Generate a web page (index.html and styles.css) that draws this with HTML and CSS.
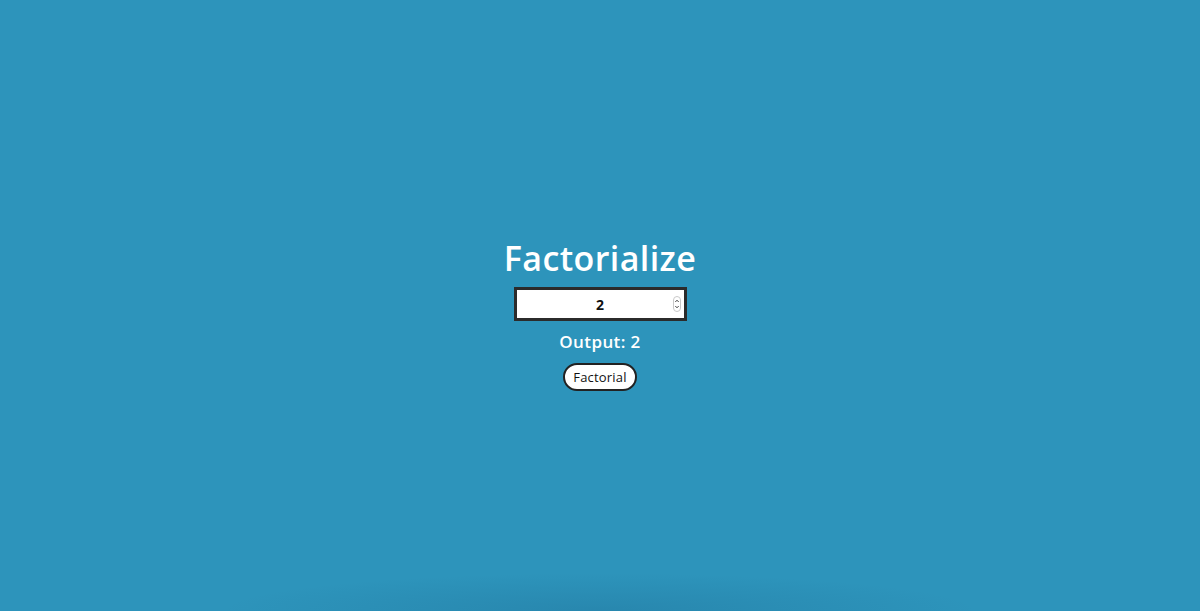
FILE: index.html
```html
<!DOCTYPE html>
<html lang="en">
<head>
<meta charset="utf-8">
<title>Factorialize</title>
<link rel="stylesheet" href="styles.css">
</head>
<body>
<main class="hero">
  <h1 class="title">Factorialize</h1>
  <div class="field">
    <input class="num" type="text" value="2">
    <svg class="spin" width="8" height="16" viewBox="0 0 8 16">
      <rect x="0.5" y="0.5" width="7" height="15" rx="3.5" fill="#fff" stroke="#c8c8c8"/>
      <path d="M2.3 6 L4 4.2 L5.7 6" fill="none" stroke="#333" stroke-width="0.9"/>
      <path d="M2.3 10 L4 11.8 L5.7 10" fill="none" stroke="#333" stroke-width="0.9"/>
    </svg>
  </div>
  <p class="output">Output: 2</p>
  <button class="btn">Factorial</button>
</main>
</body>
</html>
```

FILE: styles.css
```css
html, body {
  margin: 0;
  padding: 0;
}
body {
  background: #2d94bb;
  font-family: "Open Sans", "DejaVu Sans", sans-serif;
  color: #fff;
  overflow: hidden;
}
.hero {
  height: 611px;
  display: flex;
  flex-direction: column;
  align-items: center;
  justify-content: flex-start;
  padding-top: 237px;
  box-sizing: border-box;
  background-image:
    radial-gradient(ellipse 380px 38px at 50% 100%, rgba(10, 60, 100, 0.15), rgba(10, 60, 100, 0) 100%);
  background-repeat: no-repeat;
}
.title {
  margin: 0;
  font-size: 34px;
  font-weight: 600;
  line-height: 43px;
  letter-spacing: 0.4px;
}
.field {
  position: relative;
  margin-top: 7px;
  width: 173px;
  height: 34px;
}
.num {
  box-sizing: border-box;
  width: 100%;
  height: 100%;
  border: 3px solid #2b2b2b;
  background: #fff;
  text-align: center;
  font-family: "Open Sans", sans-serif;
  font-weight: 700;
  font-size: 14px;
  color: #111;
  padding: 0 12px;
  outline: none;
}
.spin {
  position: absolute;
  right: 6px;
  top: 9px;
}
.output {
  margin: 10px 0 0;
  font-size: 17px;
  font-weight: 600;
  line-height: 22px;
  letter-spacing: 0.4px;
}
.btn {
  margin-top: 10px;
  background: #fff;
  border: 2px solid #222;
  border-radius: 14px;
  height: 28px;
  padding: 0 8px;
  font-family: "Open Sans", sans-serif;
  font-weight: 500;
  font-size: 13px;
  letter-spacing: 0.2px;
  color: #111;
}
```
